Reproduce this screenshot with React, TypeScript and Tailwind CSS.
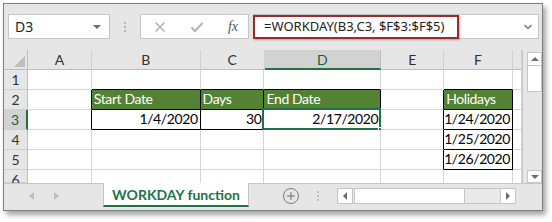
import { Plus } from "lucide-react";

const cols = [
  { k: "A", w: "w-[64px]" },
  { k: "B", w: "w-[109px]" },
  { k: "C", w: "w-[64px]" },
  { k: "D", w: "w-[117px]" },
  { k: "E", w: "w-[63px]" },
  { k: "F", w: "w-[69px]" },
  { k: "G", w: "w-[9px]" },
];

const rows = [1, 2, 3, 4, 5, 6];

// cell contents
const data: Record<string, { text: string; head?: boolean }> = {
  B2: { text: "Start Date", head: true },
  C2: { text: "Days", head: true },
  D2: { text: "End Date", head: true },
  F2: { text: "Holidays", head: true },
  B3: { text: "1/4/2020" },
  C3: { text: "30" },
  D3: { text: "2/17/2020" },
  F3: { text: "1/24/2020" },
  F4: { text: "1/25/2020" },
  F5: { text: "1/26/2020" },
};

const boxed = new Set(["B2", "C2", "D2", "B3", "C3", "D3", "F2", "F3", "F4", "F5"]);
const letters = cols.map((c) => c.k);

const cellFont = { fontFamily: "Lato, 'Liberation Sans', sans-serif" };
const uiFont = { fontFamily: "'Noto Sans', 'Open Sans', sans-serif" };

function Cell({ col, row, w }: { col: string; row: number; w: string }) {
  const id = col + row;
  const next = letters[letters.indexOf(col) + 1];
  const rightBlack = boxed.has(id) || (next ? boxed.has(next + row) : false);
  const bottomBlack = boxed.has(id) || boxed.has(col + (row + 1));
  const d = data[id];
  const selected = id === "D3";
  return (
    <div
      className={`${w} relative h-full border-r border-b flex items-end pb-[1px] ${
        rightBlack ? "border-r-black" : "border-r-[#d4d4d4]"
      } ${bottomBlack ? "border-b-black" : "border-b-[#d4d4d4]"} ${
        row === 6 ? "border-b-0" : ""
      } ${d?.head ? "bg-[#548235] text-white justify-start pl-[2px]" : "bg-white text-black justify-end pr-[2px]"}`}
    >
      {d && (
        <span className="text-[14px] leading-[18px] whitespace-nowrap tracking-[-0.4px]" style={cellFont}>
          {d.text}
        </span>
      )}
      {selected && (
        <>
          <div className="absolute left-[-2px] top-[-2px] right-[-1px] bottom-[-1px] border-2 border-[#217346]" />
          <div className="absolute right-[-4px] bottom-[-4px] w-[6px] h-[6px] bg-[#217346] border border-white" />
        </>
      )}
    </div>
  );
}

export default function App() {
  return (
    <div className="w-[552px] h-[222px] bg-white pt-[3px] pl-[3px]">
      <div className="w-[540px] h-[208px] border border-[#7f7f7f] bg-[#e6e6e6] flex flex-col shadow-[3px_4px_5px_rgba(0,0,0,0.35)]">
        {/* formula bar */}
        <div className="h-[10px]" />
        <div className="h-[25px] flex items-stretch pl-[4px]" style={uiFont}>
          <div className="w-[102px] bg-white border border-[#c6c6c6] flex items-center pl-[6px] pr-[8px] justify-between">
            <span className="text-[14px] text-[#222]">D3</span>
            <span className="w-0 h-0 border-l-[4px] border-r-[4px] border-t-[4px] border-l-transparent border-r-transparent border-t-[#6d6d6d]" />
          </div>
          <div className="w-[30px] flex flex-col items-center justify-center gap-[2px]">
            <span className="w-[2px] h-[2px] bg-[#b4b4b4]" />
            <span className="w-[2px] h-[2px] bg-[#b4b4b4]" />
            <span className="w-[2px] h-[2px] bg-[#b4b4b4]" />
          </div>
          <div className="w-[109px] bg-white border border-[#c6c6c6] flex items-center justify-between pl-[13px] pr-[10px]">
            <svg width="12" height="12" viewBox="0 0 12 12">
              <path d="M1.5 1.5 L10.5 10.5 M10.5 1.5 L1.5 10.5" stroke="#b4b4b4" strokeWidth="1.6" fill="none" />
            </svg>
            <svg width="14" height="12" viewBox="0 0 14 12">
              <path d="M1.5 6.5 L5 10 L12.5 2" stroke="#b4b4b4" strokeWidth="2" fill="none" />
            </svg>
            <span className="italic text-[14px] text-[#555]" style={{ fontFamily: "'Liberation Serif', serif" }}>
              fx
            </span>
          </div>
          <div className="w-[4px]" />
          <div className="w-[286px] bg-white border border-[#c6c6c6] flex items-center justify-between relative">
            <div className="h-[24px] w-[206px] border-2 border-[#9b2b2b] ml-[-1px] flex items-center pl-[9px] shadow-[1px_1px_2px_rgba(0,0,0,0.3)]">
              <span className="text-[13px] text-[#222] whitespace-nowrap">=WORKDAY(B3,C3, $F$3:$F$5)</span>
            </div>
            <svg width="10" height="8" viewBox="0 0 10 8" className="mr-[5px]">
              <path d="M1.5 2 L5 5.5 L8.5 2" stroke="#7a7a7a" strokeWidth="1.4" fill="none" />
            </svg>
          </div>
        </div>
        <div className="h-[11px]" />

        {/* grid + vertical scrollbar */}
        <div className="h-[133px] flex">
          <div className="w-[519px] flex flex-col border-r border-[#c6c6c6]">
            {/* column headers */}
            <div className="h-[20px] flex" style={cellFont}>
              <div className="w-[24px] h-full border-r border-b border-[#bdbdbd] flex items-end justify-end p-[2px]">
                <svg width="11" height="11" viewBox="0 0 11 11">
                  <path d="M11 0 L11 11 L0 11 Z" fill="#bdbdbd" />
                </svg>
              </div>
              {cols.map((c) => (
                <div
                  key={c.k}
                  className={`${c.w} h-full flex items-center justify-center text-[14px] ${
                    c.k === "D"
                      ? "bg-[#d2d2d2] text-[#1d5f37] border-b-2 border-b-[#217346] border-r border-r-[#bdbdbd]"
                      : "text-[#333] border-b border-b-[#bdbdbd] border-r border-r-[#d0d0d0]"
                  }`}
                >
                  {c.k !== "G" ? c.k : ""}
                </div>
              ))}
            </div>
            {rows.map((r) => (
              <div key={r} className={`${r === 6 ? "h-[13px] overflow-hidden" : "h-[20px]"} flex`}>
                <div
                  className={`w-[24px] h-full flex items-start justify-center text-[14px] leading-[19px] border-b border-b-[#d0d0d0] ${
                    r === 3
                      ? "bg-[#d2d2d2] text-[#1d5f37] border-r-2 border-r-[#217346]"
                      : "text-[#333] border-r border-r-[#bdbdbd]"
                  }`}
                  style={cellFont}
                >
                  {r}
                </div>
                {cols.map((c) => (
                  <Cell key={c.k} col={c.k} row={r} w={c.w} />
                ))}
              </div>
            ))}
          </div>
          <div className="w-[4px]" />
          <div className="w-[15px] flex flex-col pt-[2px]">
            <div className="h-[14px] bg-white border border-[#c6c6c6] flex items-center justify-center">
              <span className="w-0 h-0 border-l-[4px] border-r-[4px] border-b-[4px] border-l-transparent border-r-transparent border-b-[#6d6d6d]" />
            </div>
            <div className="h-[26px] bg-white border border-[#c6c6c6] border-t-0" />
            <div className="flex-1" />
            <div className="h-[13px] bg-white border border-[#c6c6c6] flex items-center justify-center">
              <span className="w-0 h-0 border-l-[4px] border-r-[4px] border-t-[4px] border-l-transparent border-r-transparent border-t-[#6d6d6d]" />
            </div>
          </div>
        </div>

        {/* sheet tabs */}
        <div className="flex-1 flex items-stretch border-t border-[#c6c6c6]">
          <div className="w-[99px] flex items-center pl-[25px] gap-[20px] pb-[2px]">
            <span className="w-0 h-0 border-t-[4px] border-b-[4px] border-r-[5px] border-t-transparent border-b-transparent border-r-[#bdbdbd]" />
            <span className="w-0 h-0 border-t-[4px] border-b-[4px] border-l-[5px] border-t-transparent border-b-transparent border-l-[#bdbdbd]" />
          </div>
          <div className="w-[146px] h-[24px] mt-[-1px] bg-white border-x border-[#c6c6c6] border-b-2 border-b-[#217346] flex items-center justify-center">
            <span className="text-[14px] font-bold text-[#217346]" style={cellFont}>
              WORKDAY function
            </span>
          </div>
          <div className="w-[34px]" />
          <div className="flex items-center pb-[2px]">
            <div className="w-[16px] h-[16px] rounded-full border border-[#7a7a7a] flex items-center justify-center">
              <Plus size={12} strokeWidth={2} color="#6d6d6d" />
            </div>
          </div>
          <div className="w-[38px] flex flex-col items-center justify-center gap-[2px] pb-[2px]">
            <span className="w-[2px] h-[2px] bg-[#c0c0c0]" />
            <span className="w-[2px] h-[2px] bg-[#c0c0c0]" />
            <span className="w-[2px] h-[2px] bg-[#c0c0c0]" />
          </div>
          <div className="flex items-center pb-[2px]">
            <div className="w-[179px] h-[16px] flex border border-[#c6c6c6] bg-[#e9e9e9]">
              <div className="w-[15px] bg-white border-r border-[#c6c6c6] flex items-center justify-center">
                <span className="w-0 h-0 border-t-[4px] border-b-[4px] border-r-[4px] border-t-transparent border-b-transparent border-r-[#6d6d6d]" />
              </div>
              <div className="w-[111px] bg-white border border-[#c6c6c6] ml-[1px] my-[-1px]" />
              <div className="flex-1" />
              <div className="w-[15px] bg-white border-l border-[#c6c6c6] flex items-center justify-center">
                <span className="w-0 h-0 border-t-[4px] border-b-[4px] border-l-[4px] border-t-transparent border-b-transparent border-l-[#6d6d6d]" />
              </div>
            </div>
          </div>
        </div>
      </div>
    </div>
  );
}
